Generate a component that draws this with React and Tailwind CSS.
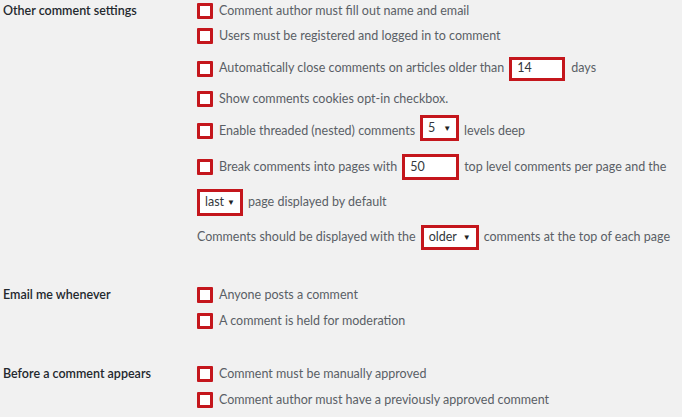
import React from "react";

const Box = () => (
  <span className="inline-block w-[16px] h-[16px] border-[3px] border-[#c4161c] bg-white rounded-[1px] shrink-0 mr-[6px]" />
);

const Input = ({ value, w, h }) => (
  <span className={`inline-flex items-center ${w} ${h} border-[3px] border-[#c4161c] bg-white pl-[5px] text-[#32373c] shrink-0`}>
    {value}
  </span>
);

const Select = ({ value, w, h }) => (
  <span className={`inline-flex items-center justify-between ${w} ${h} border-[3px] border-[#c4161c] bg-white pl-[5px] pr-[5px] text-[#32373c] shrink-0`}>
    <span>{value}</span>
    <span className="text-[8px] text-[#222]">▼</span>
  </span>
);

export default function App() {
  return (
    <div
      className="w-[682px] h-[417px] bg-[#f1f1f1] text-[12.5px] text-[#5a5f66] overflow-hidden whitespace-nowrap"
      style={{ fontFamily: "Lato, 'Open Sans', sans-serif" }}
    >
      {/* Section 1 */}
      <div className="flex">
        <div className="w-[197px] shrink-0 pl-[3px] h-[22px] flex items-center text-[#23282d] font-semibold">Other comment settings</div>
        <div className="flex flex-col">
          <div className="h-[22px] flex items-center"><Box />Comment author must fill out name and email</div>
          <div className="h-[28px] flex items-center"><Box />Users must be registered and logged in to comment</div>
          <div className="h-[37px] flex items-center">
            <Box />Automatically close comments on articles older than
            <span className="ml-[5px] mr-[6px]"><Input value="14" w="w-[56px]" h="h-[24px]" /></span>days
          </div>
          <div className="h-[24px] flex items-center"><Box />Show comments cookies opt-in checkbox.</div>
          <div className="h-[40px] flex items-center">
            <Box />Enable threaded (nested) comments
            <span className="ml-[5px] mr-[5px] -mt-[6px]"><Select value="5" w="w-[39px]" h="h-[26px]" /></span>levels deep
          </div>
          <div className="h-[32px] flex items-center">
            <Box />Break comments into pages with
            <span className="ml-[5px] mr-[5px]"><Input value="50" w="w-[57px]" h="h-[26px]" /></span>top level comments per page and the
          </div>
          <div className="h-[38px] flex items-center">
            <Select value="last" w="w-[46px]" h="h-[27px]" />
            <span className="ml-[5px]">page displayed by default</span>
          </div>
          <div className="h-[32px] flex items-center">
            Comments should be displayed with the
            <span className="ml-[5px] mr-[5px]"><Select value="older" w="w-[58px]" h="h-[25px]" /></span>comments at the top of each page
          </div>
        </div>
      </div>

      {/* Section 2 */}
      <div className="flex mt-[29px]">
        <div className="w-[197px] shrink-0 pl-[3px] h-[26px] flex items-center text-[#23282d] font-semibold">Email me whenever</div>
        <div className="flex flex-col">
          <div className="h-[26px] flex items-center"><Box />Anyone posts a comment</div>
          <div className="h-[26px] flex items-center"><Box />A comment is held for moderation</div>
        </div>
      </div>

      {/* Section 3 */}
      <div className="flex mt-[27px]">
        <div className="w-[197px] shrink-0 pl-[3px] h-[26px] flex items-center text-[#23282d] font-semibold">Before a comment appears</div>
        <div className="flex flex-col">
          <div className="h-[26px] flex items-center"><Box />Comment must be manually approved</div>
          <div className="h-[26px] flex items-center"><Box />Comment author must have a previously approved comment</div>
        </div>
      </div>
    </div>
  );
}
